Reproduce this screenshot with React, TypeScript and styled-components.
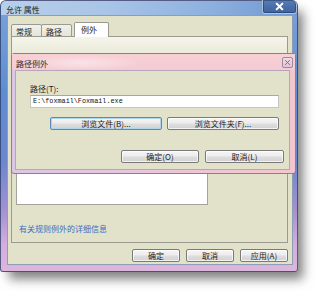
import { FC } from "react";
import styled, { createGlobalStyle } from "styled-components";

const tabs = [
  { label: "常规", width: 31, selected: false },
  { label: "路径", width: 31, selected: false },
  { label: "例外", width: 35, selected: true },
];

const GlobalStyle = createGlobalStyle`
  *, *::before, *::after { box-sizing: border-box; }
  html, body { margin: 0; padding: 0; background: #ffffff; }
  body {
    font-family: "Noto Sans CJK SC", "Noto Sans", sans-serif;
    font-size: 8px;
    color: #1a1a1a;
  }
`;

const CloseX: FC<{ size: number; color: string; weight: number }> = ({ size, color, weight }) => (
  <svg width={size} height={size} viewBox="0 0 10 10">
    <path d="M2 2 L8 8 M8 2 L2 8" stroke={color} strokeWidth={weight} strokeLinecap="square" />
  </svg>
);

const App: FC = () => {
  return (
    <Stage>
      <GlobalStyle />
      <Window>
        <TitleBar>
          <Title>允许 属性</Title>
          <CloseButton>
            <CloseX size={9} color="#ffffff" weight={2.2} />
          </CloseButton>
        </TitleBar>

        <Client>
          <TabStrip>
            {tabs.map((t, i) => (
              <Tab key={t.label} selected={t.selected} w={t.width} first={i === 0}>
                {t.label}
              </Tab>
            ))}
          </TabStrip>
          <Panel>
            <ListBox />
            <InfoLink>有关规则例外的详细信息</InfoLink>
          </Panel>
          <Footer>
            <Button w={48}>确定</Button>
            <Button w={48}>取消</Button>
            <Button w={48}>应用(A)</Button>
          </Footer>
        </Client>

        <Dialog>
          <DialogTitleBar>
            <DialogTitle>路径例外</DialogTitle>
            <DialogClose>
              <CloseX size={7} color="#6a5a6a" weight={1.1} />
            </DialogClose>
          </DialogTitleBar>
          <DialogClient>
            <FieldLabel>路径(T):</FieldLabel>
            <PathInput>E:\foxmail\Foxmail.exe</PathInput>
            <BrowseRow>
              <Button w={112} focused>浏览文件(B)...</Button>
              <Button w={112}>浏览文件夹(F)...</Button>
            </BrowseRow>
            <OkRow>
              <Button w={78}>确定(O)</Button>
              <Button w={79}>取消(L)</Button>
            </OkRow>
          </DialogClient>
        </Dialog>
      </Window>
    </Stage>
  );
};

export default App;

const Stage = styled.div`
  width: 325px;
  height: 300px;
  overflow: hidden;
`;

const Window = styled.div`
  position: relative;
  width: 298px;
  height: 272px;
  display: flex;
  flex-direction: column;
  border: 1px solid rgba(40, 60, 100, 0.75);
  border-radius: 6px 6px 3px 3px;
  background: linear-gradient(
    180deg,
    #7aa2da 0%,
    #5f8cd2 35%,
    #6d86cf 60%,
    #a691d2 78%,
    #d3aede 90%,
    #dcb6dc 100%
  );
  box-shadow: 7px 9px 11px -2px rgba(0, 0, 0, 0.5);
`;

const TitleBar = styled.div`
  height: 16px;
  display: flex;
  justify-content: space-between;
  align-items: flex-start;
  border-radius: 5px 5px 0 0;
  background: linear-gradient(90deg, #b7cfea 0%, #a9c5e7 35%, #8db1df 70%, #6f98d2 100%);
`;

const Title = styled.div`
  padding: 4px 0 0 5px;
  font-size: 8px;
  line-height: 10px;
  color: #1c1c1c;
`;

const CloseButton = styled.div`
  width: 35px;
  height: 14px;
  margin: -1px 0 0 0;
  display: flex;
  align-items: center;
  justify-content: center;
  border: 1px solid rgba(255, 255, 255, 0.55);
  border-top: none;
  border-radius: 0 5px 3px 3px;
  background: linear-gradient(180deg, #5a7fb8 0%, #4a6ea8 50%, #3f63a0 100%);
  box-shadow: inset 0 0 0 1px rgba(20, 40, 80, 0.45);
`;

const Client = styled.div`
  flex: 1;
  display: flex;
  flex-direction: column;
  margin: 0 4px 6px 6px;
  padding: 6px 4px 2px 3px;
  background: #e2e2cb;
  border: 1px solid #8e9cb4;
`;

const TabStrip = styled.div`
  display: flex;
  align-items: flex-end;
  height: 15px;
  margin-bottom: -1px;
  position: relative;
  z-index: 1;
`;

const Tab = styled.div<{ selected: boolean; w: number; first: boolean }>`
  width: ${(p) => p.w}px;
  height: ${(p) => (p.selected ? 15 : 13)}px;
  margin-left: ${(p) => (p.first ? 0 : p.selected ? 2 : -1)}px;
  padding: ${(p) => (p.selected ? "1px 0 0 6px" : "1px 0 0 4px")};
  font-size: 8px;
  line-height: 11px;
  border: 1px solid #9a9a92;
  border-bottom: ${(p) => (p.selected ? "none" : "1px solid #9a9a92")};
  border-radius: 2px 2px 0 0;
  background: ${(p) =>
    p.selected ? "#ffffff" : "linear-gradient(180deg, #f1f1ea 0%, #e4e4da 100%)"};
`;

const Panel = styled.div`
  height: 207px;
  display: flex;
  flex-direction: column;
  padding: 18px 0 0 4px;
  border: 1px solid #9a9a92;
  background: linear-gradient(180deg, #f4f4ea 0px, #e2e2cb 32px);
`;

const ListBox = styled.div`
  width: 192px;
  height: 150px;
  background: #ffffff;
  border: 1px solid #a4a49c;
`;

const InfoLink = styled.div`
  margin: 19px 0 0 3px;
  font-size: 8px;
  line-height: 10px;
  color: #3a6cc4;
`;

const Footer = styled.div`
  display: flex;
  justify-content: flex-end;
  gap: 6px;
  margin-top: 6px;
`;

const Button = styled.div<{ w: number; focused?: boolean }>`
  width: ${(p) => p.w}px;
  height: 13px;
  display: flex;
  align-items: center;
  justify-content: center;
  font-size: 8px;
  line-height: 10px;
  color: #222222;
  border: 1px solid ${(p) => (p.focused ? "#5d8ab4" : "#7a7a7a")};
  border-radius: 2px;
  background: linear-gradient(180deg, #f6f6f6 0%, #ececec 48%, #dedede 52%, #d2d2d2 100%);
  box-shadow: ${(p) =>
    p.focused ? "inset 0 0 0 1px #aed4ec" : "inset 0 0 0 1px rgba(255,255,255,0.7)"};
`;

const Dialog = styled.div`
  position: absolute;
  left: 10px;
  top: 52px;
  width: 285px;
  height: 121px;
  display: flex;
  flex-direction: column;
  border: 1px solid #8c7e90;
  border-radius: 3px;
  background: linear-gradient(90deg, #dcc6e6 0%, #e9c6dc 45%, #f3c6cf 100%);
`;

const DialogTitleBar = styled.div`
  height: 16px;
  display: flex;
  justify-content: space-between;
  align-items: flex-start;
  padding: 3px 2px 0 4px;
  background: radial-gradient(ellipse 60px 8px at 70px 9px, rgba(255, 255, 255, 0.45), transparent),
    linear-gradient(180deg, #f7d0d6 0%, #f4cbd2 100%);
`;

const DialogTitle = styled.div`
  font-size: 8px;
  line-height: 10px;
  padding-top: 2px;
  color: #2a2a2a;
`;

const DialogClose = styled.div`
  width: 11px;
  height: 11px;
  display: flex;
  align-items: center;
  justify-content: center;
  border: 1px solid #9a8a9c;
  border-radius: 2px;
  background: linear-gradient(180deg, #f2dbe6 0%, #e2c4d6 100%);
`;

const DialogClient = styled.div`
  flex: 1;
  display: flex;
  flex-direction: column;
  margin: 0 5px 3px 3px;
  padding: 12px 5px 0 14px;
  background: #e2e2cb;
  border: 1px solid #b6a6ba;
`;

const FieldLabel = styled.div`
  font-size: 8px;
  line-height: 11px;
  color: #1c1c1c;
`;

const PathInput = styled.div`
  width: 249px;
  height: 13px;
  margin-top: 1px;
  padding: 0 2px;
  font-family: "Liberation Mono", "DejaVu Sans Mono", monospace;
  font-size: 6.8px;
  line-height: 11px;
  color: #111111;
  background: #ffffff;
  border: 1px solid #c6c6c0;
  border-top-color: #a8a8a2;
`;

const BrowseRow = styled.div`
  display: flex;
  gap: 5px;
  margin: 9px 0 0 20px;
`;

const OkRow = styled.div`
  display: flex;
  justify-content: flex-end;
  gap: 6px;
  margin-top: 20px;
`;
